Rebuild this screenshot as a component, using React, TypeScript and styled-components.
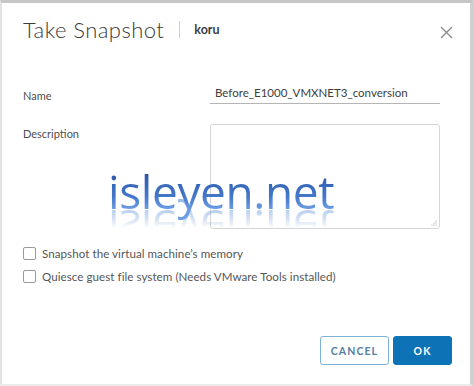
import styled, { createGlobalStyle } from "styled-components";

const GlobalStyle = createGlobalStyle`
  html, body {
    margin: 0;
    padding: 0;
    background: #ffffff;
  }
  body {
    font-family: Lato, "Open Sans", "Liberation Sans", sans-serif;
    color: #565656;
  }
`;

const colors = {
  Text: "#565656",
  Label: "#4f4f4f",
  Blue: "#0d72b6",
  BlueBorder: "#7eb3d8",
};

export default function App() {
  return (
    <>
      <GlobalStyle />
      <Dialog>
        <Header>
          <Title>Take Snapshot</Title>
          <Divider />
          <Subject>koru</Subject>
          <CloseBtn aria-label="close">
            <svg width="13" height="13" viewBox="0 0 13 13">
              <path
                d="M1 1 L12 12 M12 1 L1 12"
                stroke="#8a8a8a"
                strokeWidth="1.3"
                fill="none"
              />
            </svg>
          </CloseBtn>
        </Header>

        <Form>
          <Label>Name</Label>
          <TextInput>Before_E1000_VMXNET3_conversion</TextInput>
          <Label $top>Description</Label>
          <TextArea>
            <Grip viewBox="0 0 6 6">
              <circle cx="5" cy="1" r="0.6" />
              <circle cx="3" cy="3" r="0.6" />
              <circle cx="5" cy="3" r="0.6" />
              <circle cx="1" cy="5" r="0.6" />
              <circle cx="3" cy="5" r="0.6" />
              <circle cx="5" cy="5" r="0.6" />
            </Grip>
          </TextArea>
        </Form>

        <Checks>
          <CheckRow>
            <Box />
            Snapshot the virtual machine’s memory
          </CheckRow>
          <CheckRow>
            <Box />
            Quiesce guest file system (Needs VMware Tools installed)
          </CheckRow>
        </Checks>

        <Footer>
          <Button>CANCEL</Button>
          <Button $primary>OK</Button>
        </Footer>

        <Watermark>isleyen.net</Watermark>
      </Dialog>
    </>
  );
}

const Dialog = styled.div`
  position: relative;
  box-sizing: border-box;
  width: 474px;
  height: 386px;
  background: #ffffff;
  border-top: 3px solid #c6c6c6;
  border-left: 2px solid #e2e2e2;
  border-right: 4px solid #d0d0d0;
  border-bottom: 2px solid #ececec;
  display: flex;
  flex-direction: column;
`;

const Header = styled.div`
  display: flex;
  align-items: center;
  padding: 11px 17px 0 21px;
  height: 30px;
`;

const Title = styled.h1`
  margin: 0;
  font-family: Lato, "Open Sans", sans-serif;
  font-weight: 300;
  font-size: 22px;
  color: #3a3a3a;
  letter-spacing: 0.45px;
`;

const Divider = styled.div`
  width: 1px;
  height: 17px;
  background: #cfcfcf;
  margin: 0 14px 0 15px;
`;

const Subject = styled.span`
  font-size: 12.5px;
  font-weight: 700;
  color: #3d3d3d;
  margin-top: 1px;
`;

const CloseBtn = styled.button`
  margin-left: auto;
  border: 0;
  background: none;
  padding: 0;
  display: flex;
  margin-top: 6px;
`;

const Form = styled.div`
  display: grid;
  grid-template-columns: 187px 230px;
  row-gap: 20px;
  padding: 42px 0 0 21px;
`;

const Label = styled.div<{ $top?: boolean }>`
  font-size: 11px;
  color: ${colors.Label};
  align-self: ${(p) => (p.$top ? "start" : "center")};
  padding-top: ${(p) => (p.$top ? "3px" : "0")};
`;

const TextInput = styled.div`
  font-size: 11.5px;
  color: #3e3e3e;
  padding: 0 0 4px 5px;
  border-bottom: 1px solid #b5b5b5;
  white-space: nowrap;
`;

const TextArea = styled.div`
  position: relative;
  box-sizing: border-box;
  height: 105px;
  border: 1px solid #d6d6d6;
  border-radius: 3px;
`;

const Grip = styled.svg`
  position: absolute;
  right: 2px;
  bottom: 2px;
  width: 6px;
  height: 6px;
  fill: #9a9a9a;
`;

const Checks = styled.div`
  display: flex;
  flex-direction: column;
  gap: 9px;
  padding: 17px 0 0 21px;
`;

const CheckRow = styled.label`
  display: flex;
  align-items: center;
  gap: 6px;
  font-size: 11.6px;
  letter-spacing: 0.05px;
  color: ${colors.Text};
  height: 14px;
`;

const Box = styled.span`
  box-sizing: border-box;
  width: 13px;
  height: 13px;
  border: 1px solid #9a9a9a;
  border-radius: 2px;
`;

const Footer = styled.div`
  margin-top: auto;
  display: flex;
  justify-content: flex-end;
  gap: 4px;
  padding: 0 18px 19px 0;
`;

const Button = styled.button<{ $primary?: boolean }>`
  box-sizing: border-box;
  height: 29px;
  min-width: ${(p) => (p.$primary ? "59px" : "69px")};
  border-radius: 3px;
  font-family: Lato, "Open Sans", sans-serif;
  font-size: 10.5px;
  font-weight: 700;
  letter-spacing: 1.1px;
  border: 1px solid ${(p) => (p.$primary ? colors.Blue : colors.BlueBorder)};
  background: ${(p) => (p.$primary ? colors.Blue : "#ffffff")};
  color: ${(p) => (p.$primary ? "#ffffff" : "#56809f")};
`;

const Watermark = styled.div`
  position: absolute;
  left: 106px;
  top: 157px;
  font-family: "Open Sans", "Noto Sans", sans-serif;
  font-size: 46px;
  line-height: 62px;
  letter-spacing: -0.4px;
  background: linear-gradient(180deg, #2a55a6 20%, #4579cc 60%, #6d9ee3 80%);
  -webkit-background-clip: text;
  background-clip: text;
  color: transparent;
  -webkit-box-reflect: below -25px
    linear-gradient(transparent 50%, rgba(255, 255, 255, 0.8));
  pointer-events: none;
`;
